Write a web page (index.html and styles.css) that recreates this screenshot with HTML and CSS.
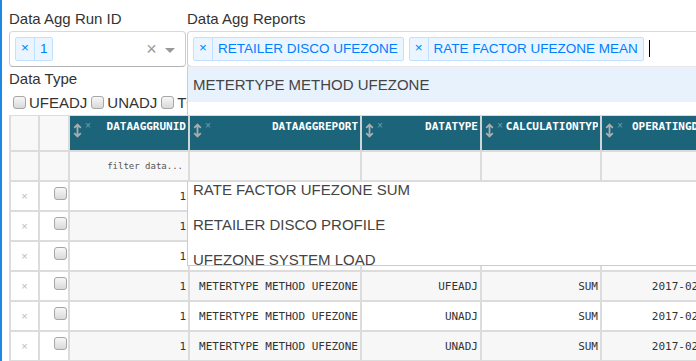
FILE: index.html
```html
<!DOCTYPE html>
<html>
<head>
<meta charset="utf-8">
<link rel="stylesheet" href="styles.css">
</head>
<body>
<div class="page">
  <div class="filters">
    <div class="col-left">
      <label class="field-label">Data Agg Run ID</label>
      <div class="select">
        <div class="control">
          <div class="values">
            <span class="tag"><span class="tag-x">×</span><span class="tag-label">1</span></span>
          </div>
          <span class="clear">×</span>
          <span class="arrow-zone"><span class="arrow"></span></span>
        </div>
      </div>
      <label class="field-label type-label">Data Type</label>
      <div class="checks">
        <input type="checkbox" class="cb"><span>UFEADJ</span>
        <input type="checkbox" class="cb"><span>UNADJ</span>
        <input type="checkbox" class="cb"><span>TOTAL</span>
      </div>
    </div>
    <div class="col-right">
      <label class="field-label">Data Agg Reports</label>
      <div class="select">
        <div class="control">
          <div class="values">
            <span class="tag"><span class="tag-x">×</span><span class="tag-label">RETAILER DISCO UFEZONE</span></span>
            <span class="tag"><span class="tag-x">×</span><span class="tag-label">RATE FACTOR UFEZONE MEAN</span></span>
            <span class="caret"></span>
          </div>
        </div>
        <div class="menu">
          <div class="menu-inner">
            <div class="option focused">METERTYPE METHOD UFEZONE</div>
            <div class="option">PROFILE CLASS METHOD UFEZONE</div>
            <div class="option">RATE FACTOR UFEZONE MEDIAN</div>
            <div class="option">RATE FACTOR UFEZONE SUM</div>
            <div class="option">RETAILER DISCO PROFILE</div>
            <div class="option">UFEZONE SYSTEM LOAD</div>
            <div class="option">UFEZONE TOTAL LOAD</div>
          </div>
        </div>
      </div>
    </div>
  </div>

  <div class="grid-wrap">
    <table class="grid">
      <colgroup>
        <col class="w29"><col class="w30"><col class="w120"><col class="w172"><col class="w120"><col class="w120"><col class="w120">
      </colgroup>
      <thead>
        <tr class="head-row">
          <th></th>
          <th></th>
          <th class="h"><div class="hc"><svg class="sort" viewBox="0 0 9 15"><path d="M4.5 1.5V13.5M1.2 4.8L4.5 1.5L7.8 4.8M1.2 10.2L4.5 13.5L7.8 10.2" fill="none" stroke="#a9aeb0" stroke-width="1.8"/></svg><span class="hx">×</span><span class="hl">DATAAGGRUNID</span></div></th>
          <th class="h"><div class="hc"><svg class="sort" viewBox="0 0 9 15"><path d="M4.5 1.5V13.5M1.2 4.8L4.5 1.5L7.8 4.8M1.2 10.2L4.5 13.5L7.8 10.2" fill="none" stroke="#a9aeb0" stroke-width="1.8"/></svg><span class="hx">×</span><span class="hl">DATAAGGREPORT</span></div></th>
          <th class="h"><div class="hc"><svg class="sort" viewBox="0 0 9 15"><path d="M4.5 1.5V13.5M1.2 4.8L4.5 1.5L7.8 4.8M1.2 10.2L4.5 13.5L7.8 10.2" fill="none" stroke="#a9aeb0" stroke-width="1.8"/></svg><span class="hx">×</span><span class="hl">DATATYPE</span></div></th>
          <th class="h"><div class="hc"><svg class="sort" viewBox="0 0 9 15"><path d="M4.5 1.5V13.5M1.2 4.8L4.5 1.5L7.8 4.8M1.2 10.2L4.5 13.5L7.8 10.2" fill="none" stroke="#a9aeb0" stroke-width="1.8"/></svg><span class="hx">×</span><span class="hl">CALCULATIONTYPE</span></div></th>
          <th class="h"><div class="hc"><svg class="sort" viewBox="0 0 9 15"><path d="M4.5 1.5V13.5M1.2 4.8L4.5 1.5L7.8 4.8M1.2 10.2L4.5 13.5L7.8 10.2" fill="none" stroke="#a9aeb0" stroke-width="1.8"/></svg><span class="hx">×</span><span class="hl">OPERATINGDATE</span></div></th>
        </tr>
        <tr class="filter-row">
          <th></th><th></th><th class="filter">filter data...</th><th></th><th></th><th></th><th></th>
        </tr>
      </thead>
      <tbody>
        <tr><td class="x">×</td><td class="c"><input type="checkbox" class="rcb"></td><td>1</td><td>RETAILER DISCO UFEZONE</td><td>UFEADJ</td><td>MEAN</td><td>2017-02-01</td></tr>
        <tr><td class="x">×</td><td class="c"><input type="checkbox" class="rcb"></td><td>1</td><td>RETAILER DISCO UFEZONE</td><td>UNADJ</td><td>MEAN</td><td>2017-02-01</td></tr>
        <tr><td class="x">×</td><td class="c"><input type="checkbox" class="rcb"></td><td>1</td><td>RATE FACTOR UFEZONE MEAN</td><td>UFEADJ</td><td>MEAN</td><td>2017-02-01</td></tr>
        <tr><td class="x">×</td><td class="c"><input type="checkbox" class="rcb"></td><td>1</td><td>METERTYPE METHOD UFEZONE</td><td>UFEADJ</td><td>SUM</td><td>2017-02-01</td></tr>
        <tr><td class="x">×</td><td class="c"><input type="checkbox" class="rcb"></td><td>1</td><td>METERTYPE METHOD UFEZONE</td><td>UNADJ</td><td>SUM</td><td>2017-02-01</td></tr>
        <tr><td class="x">×</td><td class="c"><input type="checkbox" class="rcb"></td><td>1</td><td>METERTYPE METHOD UFEZONE</td><td>UNADJ</td><td>SUM</td><td>2017-02-01</td></tr>
      </tbody>
    </table>
  </div>
</div>
</body>
</html>
```

FILE: styles.css
```css
html, body {
  margin: 0;
  padding: 0;
  overflow: hidden;
  background: #fff;
}
body {
  font-family: "Liberation Sans", Arial, sans-serif;
  font-size: 15px;
  color: #333;
}
.page {
  border-left: 2px solid #1e88e5;
  padding: 10px 0 0 7px;
  height: 361px;
  box-sizing: border-box;
}
.filters {
  display: flex;
  align-items: flex-start;
}
.col-left {
  width: 177px;
  flex: none;
  margin-right: 1px;
}
.col-right {
  width: 620px;
  flex: none;
}
.field-label {
  display: block;
  line-height: 17px;
  margin-bottom: 4px;
}
.type-label {
  margin-top: 3px;
  margin-bottom: 7px;
}
.select {
  position: relative;
}
.control {
  display: flex;
  height: 36px;
  box-sizing: border-box;
  border: 1px solid #ccc;
  border-color: #d9d9d9 #ccc #b3b3b3;
  border-radius: 4px;
  background: #fff;
}
.values {
  flex: 1;
  display: flex;
  align-items: flex-start;
  min-width: 0;
  white-space: nowrap;
}
.tag {
  display: flex;
  flex: none;
  margin: 5px 0 0 5px;
  border: 1px solid #c2e0ff;
  background: #ebf5ff;
  border-radius: 2px;
  color: #007eff;
  font-size: 13.5px;
  line-height: 18px;
}
.tag-x {
  padding: 1px 5px 3px;
  border-right: 1px solid #c2e0ff;
}
.tag-label {
  padding: 2px 5px;
}
.caret {
  flex: none;
  width: 1px;
  height: 17px;
  background: #000;
  margin: 8px 0 0 5px;
}
.clear {
  width: 17px;
  flex: none;
  text-align: center;
  font-size: 18px;
  line-height: 34px;
  color: #999;
}
.arrow-zone {
  width: 25px;
  flex: none;
  box-sizing: border-box;
  padding: 5px 5px 0 0;
  display: flex;
  align-items: center;
  justify-content: center;
}
.arrow {
  width: 0;
  height: 0;
  border-style: solid;
  border-width: 5px 5px 2.5px;
  border-color: #999 transparent transparent;
}
.menu {
  position: absolute;
  top: 100%;
  left: 0;
  right: 0;
  margin-top: -1px;
  background: #fff;
  border: 1px solid #ccc;
  border-top-color: #e6e6e6;
  z-index: 2;
}
.menu-inner {
  max-height: 198px;
  overflow: hidden;
}
.option {
  padding: 8px 5px;
  line-height: 19px;
  color: #444;
  white-space: nowrap;
}
.option.focused {
  background: #e7f2fd;
}
.checks {
  display: flex;
  align-items: center;
  height: 17px;
  line-height: 17px;
  white-space: nowrap;
}
.cb, .rcb {
  -webkit-appearance: none;
  appearance: none;
  width: 13px;
  height: 13px;
  box-sizing: border-box;
  border: 1px solid #a6a6a6;
  border-radius: 3px;
  background: linear-gradient(#f7f7f7, #d9d9d9);
  flex: none;
}
.cb {
  margin: 0 3px 0 4px;
}
.rcb {
  display: block;
  margin: 0;
}
.grid-wrap {
  margin-top: 4px;
}
.grid {
  border-collapse: separate;
  border-spacing: 0;
  table-layout: fixed;
  width: 713px;
  border-left: 2px solid #dcdcdc;
  font-family: "DejaVu Sans Mono", "Liberation Mono", monospace;
  font-size: 11px;
  color: #333;
}
.w29 { width: 29px; }
.w30 { width: 30px; }
.w120 { width: 120px; }
.w172 { width: 172px; }
.grid th, .grid td {
  padding: 0;
  border-right: 2px solid #dcdcdc;
  border-bottom: 2px solid #dcdcdc;
  overflow: hidden;
  white-space: nowrap;
  box-sizing: border-box;
}
.head-row th {
  height: 37px;
  border-top: 1px solid #dcdcdc;
  vertical-align: top;
  position: relative;
  z-index: 3;
  background: #f8f8f8;
}
.head-row th.h {
  background: #1b647a;
  border-right-color: #d0d5d7;
}
.hc {
  display: flex;
  align-items: flex-start;
  padding: 4px 2px 0 3px;
  color: #fff;
}
.sort {
  width: 9px;
  height: 15px;
  margin-top: 3px;
  flex: none;
}
.hx {
  flex: none;
  font-family: "Liberation Sans", Arial, sans-serif;
  font-size: 10px;
  line-height: 8px;
  font-weight: normal;
  color: #7f9ca6;
  margin: 2px 0 0 3px;
}
.hl {
  flex: 1;
  min-width: 0;
  overflow: hidden;
  text-align: right;
  margin-left: 3px;
  font-weight: bold;
  font-size: 11px;
  line-height: 13px;
}
.filter-row th {
  height: 30px;
  background: #f8f8f8;
  position: relative;
  z-index: 3;
  font-weight: normal;
  vertical-align: middle;
}
.filter-row th.filter {
  text-align: right;
  padding-right: 5px;
  font-size: 9px;
  color: #555;
}
.grid td {
  height: 30px;
  text-align: right;
  padding-right: 2px;
  vertical-align: middle;
  background: #fff;
}
.grid tbody tr:nth-child(even) td {
  background: #f7f7f7;
}
.grid tbody tr td.x,
.grid tbody tr td.c {
  background: #fff;
}
.grid td.x {
  text-align: center;
  padding: 0;
  font-family: "Liberation Sans", Arial, sans-serif;
  font-size: 11px;
  color: #bbb;
}
.grid td.c {
  text-align: left;
  vertical-align: top;
  padding: 5px 0 0 14px;
}
```
